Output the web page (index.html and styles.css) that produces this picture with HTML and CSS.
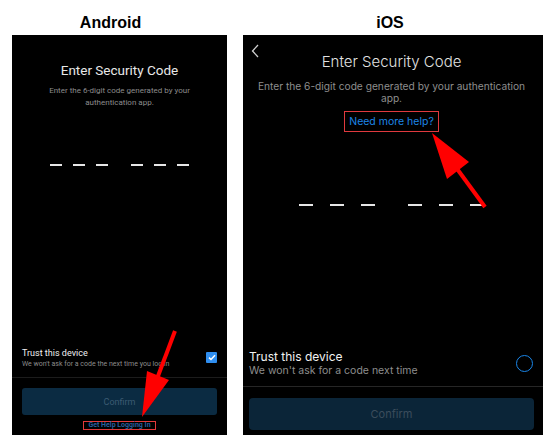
FILE: index.html
```html
<!DOCTYPE html>
<html lang="en">
<head>
  <meta charset="UTF-8">
  <title>Enter Security Code - Android vs iOS</title>
  <link rel="stylesheet" href="styles.css">
</head>
<body>
  <div class="page">
    <section class="col col-android">
      <h2 class="label">Android</h2>
      <div class="phone android">
        <h3 class="a-title">Enter Security Code</h3>
        <p class="a-sub">Enter the 6-digit code generated by your<br>authentication app.</p>
        <div class="code a-code">
          <span class="dash"></span><span class="dash"></span><span class="dash"></span>
          <span class="dash split"></span><span class="dash"></span><span class="dash"></span>
        </div>
        <div class="spacer"></div>
        <div class="trust a-trust">
          <div class="trust-text">
            <div class="trust-title">Trust this device</div>
            <div class="trust-sub">We won't ask for a code the next time you log in</div>
          </div>
          <span class="checkbox">
            <svg width="8" height="7" viewBox="0 0 8 7"><path d="M1 3.6 L3 5.5 L7 1.2" fill="none" stroke="#fff" stroke-width="1.5"/></svg>
          </span>
        </div>
        <button class="confirm a-confirm" type="button">Confirm</button>
        <div class="a-link-row"><a class="a-link" href="#">Get Help Logging In</a></div>
      </div>
    </section>

    <section class="col col-ios">
      <h2 class="label">iOS</h2>
      <div class="phone ios">
        <div class="nav">
          <svg width="8" height="14" viewBox="0 0 8 14"><path d="M7 1 L1.5 7 L7 13" fill="none" stroke="#cfcfcf" stroke-width="1.3"/></svg>
        </div>
        <h3 class="i-title">Enter Security Code</h3>
        <p class="i-sub">Enter the 6-digit code generated by your authentication<br>app.</p>
        <div class="i-link-row"><a class="i-link" href="#">Need more help?</a></div>
        <div class="code i-code">
          <span class="dash"></span><span class="dash"></span><span class="dash"></span>
          <span class="dash split"></span><span class="dash"></span><span class="dash"></span>
        </div>
        <div class="spacer"></div>
        <div class="trust i-trust">
          <div class="trust-text">
            <div class="trust-title">Trust this device</div>
            <div class="trust-sub">We won't ask for a code next time</div>
          </div>
          <span class="radio"></span>
        </div>
        <button class="confirm i-confirm" type="button">Confirm</button>
      </div>
    </section>

    <!-- red annotation arrows on top of the screenshots -->
    <svg class="arrows" width="554" height="448" viewBox="0 0 554 448">
      <line x1="175" y1="331" x2="155" y2="384" stroke="#ff0000" stroke-width="4"/>
      <polygon points="142,417 169,380 147,371" fill="#ff0000"/>
      <line x1="485" y1="207" x2="455" y2="166" stroke="#ff0000" stroke-width="4"/>
      <polygon points="432,133 469,162 447,179" fill="#ff0000"/>
    </svg>
  </div>
</body>
</html>
```

FILE: styles.css
```css
body {
  margin: 0;
  background: #fff;
  font-family: 'Liberation Sans', Arial, sans-serif;
}

.page {
  position: relative;
  width: 554px;
  height: 448px;
  display: flex;
  gap: 16px;
  padding-left: 12px;
  box-sizing: border-box;
}

.col {
  display: flex;
  flex-direction: column;
}
.col-android { width: 215px; }
.col-ios { width: 300px; }

.label {
  margin: 0;
  height: 35px;
  padding-top: 14px;
  box-sizing: border-box;
  font-size: 16px;
  line-height: 18px;
  font-weight: bold;
  color: #000;
  text-align: center;
}
.col-android .label { padding-right: 18px; }
.col-ios .label { padding-right: 6px; }

.phone {
  height: 400px;
  background: #000;
  display: flex;
  flex-direction: column;
  box-sizing: border-box;
}
.spacer { flex: 1; }

.code {
  display: flex;
  justify-content: center;
}
.dash {
  background: #e6e6e6;
  height: 2px;
}
.confirm {
  border: none;
  display: block;
  width: 100%;
  cursor: default;
}

/* ---- Android ---- */
.android {
  font-family: Roboto, 'Noto Sans', sans-serif;
  padding: 0 10px 5px;
}
.a-title {
  margin: 27px 0 0;
  font-size: 13.5px;
  line-height: 17px;
  font-weight: normal;
  color: #e8e8e8;
  text-align: center;
}
.a-sub {
  margin: 6px 0 0;
  font-size: 8px;
  line-height: 11.5px;
  color: #8c8c8c;
  text-align: center;
}
.a-code {
  margin-top: 56px;
  gap: 11px;
}
.a-code .dash { width: 12px; }
.a-code .split { margin-left: 12px; }

.trust {
  display: flex;
  align-items: center;
  justify-content: space-between;
}
.a-trust {
  margin: 0 -10px;
  padding: 0 10px 8px;
  border-bottom: 1px solid #1c1c1c;
}
.a-trust .trust-title {
  font-size: 9px;
  line-height: 11px;
  color: #f0f0f0;
}
.a-trust .trust-sub {
  font-size: 7px;
  line-height: 10px;
  color: #8c8c8c;
}
.checkbox {
  width: 11px;
  height: 11px;
  border-radius: 1px;
  background: #2f8ef0;
  display: flex;
  align-items: center;
  justify-content: center;
  margin-top: -3px;
}
.a-confirm {
  margin-top: 10px;
  height: 27px;
  border-radius: 3px;
  background: #0b2b42;
  color: #3b5b73;
  font-family: Roboto, sans-serif;
  font-size: 9px;
}
.a-link-row {
  text-align: center;
  margin-top: 6px;
  line-height: 9px;
  height: 9px;
}
.a-link {
  display: inline-block;
  border: 1px solid #e23a3a;
  padding: 0 4px;
  font-size: 7px;
  line-height: 7px;
  font-weight: bold;
  color: #2a5f9e;
  text-decoration: none;
  vertical-align: top;
}

/* ---- iOS ---- */
.ios {
  font-family: Inter, 'Open Sans', sans-serif;
  padding: 0 9px 5px 6px;
}
.nav {
  height: 17px;
  padding: 7px 0 0 2px;
  box-sizing: border-box;
  overflow: visible;
}
.i-title {
  margin: 0;
  font-size: 15px;
  line-height: 20px;
  font-weight: 300;
  color: #e2e2e2;
  text-align: center;
}
.i-sub {
  margin: 8px 0 0;
  font-size: 10.2px;
  line-height: 12px;
  color: #8e8e8e;
  text-align: center;
}
.i-link-row {
  text-align: center;
  margin-top: 5px;
}
.i-link {
  display: inline-block;
  border: 1.5px solid #e0393e;
  padding: 3px 4px;
  font-size: 10.5px;
  line-height: 13px;
  color: #1d86e6;
  text-decoration: none;
}
.i-code {
  margin-top: 72px;
  gap: 17px;
}
.i-code .dash { width: 14px; }
.i-code .split { margin-left: 16px; }

.i-trust {
  margin: 0 -9px 0 -6px;
  padding: 0 9px 9px 6px;
  border-bottom: 1px solid #262626;
}
.i-trust .trust-title {
  font-size: 12px;
  line-height: 14px;
  color: #f2f2f2;
}
.i-trust .trust-sub {
  font-size: 10.5px;
  line-height: 13px;
  color: #8e8e8e;
}
.radio {
  width: 15px;
  height: 15px;
  border: 1.5px solid #1a86e8;
  border-radius: 50%;
  margin-right: 1px;
}
.i-confirm {
  margin-top: 11px;
  height: 32px;
  border-radius: 4px;
  background: #0b2538;
  color: #3b4d5c;
  font-family: Inter, sans-serif;
  font-size: 11px;
}

.arrows {
  position: absolute;
  left: 0;
  top: 0;
  pointer-events: none;
}
```
